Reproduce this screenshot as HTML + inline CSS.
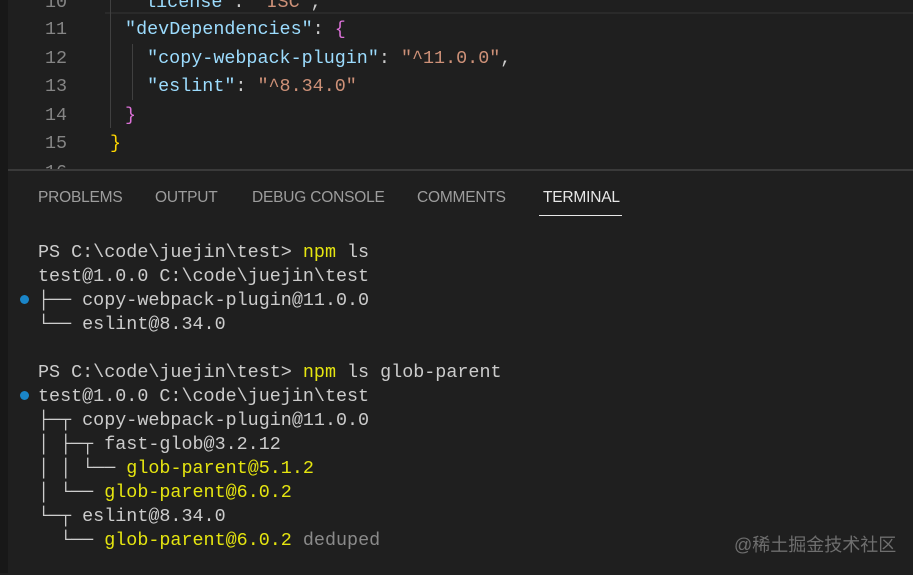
<!DOCTYPE html><html><head><meta charset="utf-8"><style>
body{margin:0;width:913px;height:573px;background:#1f1f1f;overflow:hidden;position:relative;font-family:"Liberation Mono",monospace}
.l{position:absolute;white-space:pre;font-size:18.4px;line-height:24px;color:#cccccc}
.n{color:#858585;font-size:18.4px;position:absolute;white-space:pre;line-height:24px}
.k{color:#9cdcfe}.s{color:#ce9178}.y{color:#e5e510}.p{color:#da70d6}.g{color:#ffd700}.d{color:#8a8a8a}
.tab{position:absolute;top:189px;font-family:"Liberation Sans",sans-serif;font-size:15.5px;color:#9d9d9d;letter-spacing:-0.2px}
.dot{position:absolute;left:20px;width:9px;height:9px;border-radius:50%;background:#1a85c8}
</style></head><body>
<div style="position:absolute;left:0;top:0;width:8px;height:573px;background:#181818"></div>
<div style="position:absolute;left:105px;top:12px;width:808px;height:2px;background:#2a2a2a"></div>
<div style="position:absolute;left:110px;top:0;width:1px;height:128px;background:#404040"></div>
<div style="position:absolute;left:132px;top:44px;width:1px;height:56px;background:#404040"></div>
<div class="n" style="left:45px;top:-9px">10</div>
<div class="l" style="left:112px;top:-9px"><span class="k">  "license"</span>: <span class="s">"ISC"</span>,</div>
<div class="n" style="left:45px;top:18px">11</div>
<div class="l" style="left:114px;top:18px"> <span class="k">"devDependencies"</span>: <span class="p">{</span></div>
<div class="n" style="left:45px;top:47px">12</div>
<div class="l" style="left:114px;top:47px">   <span class="k">"copy-webpack-plugin"</span>: <span class="s">"^11.0.0"</span>,</div>
<div class="n" style="left:45px;top:75px">13</div>
<div class="l" style="left:114px;top:75px">   <span class="k">"eslint"</span>: <span class="s">"^8.34.0"</span></div>
<div class="n" style="left:45px;top:104px">14</div>
<div class="l" style="left:114px;top:104px"> <span class="p">}</span></div>
<div class="n" style="left:45px;top:132px">15</div>
<div class="l" style="left:110px;top:132px"><span class="g">}</span></div>
<div class="n" style="left:45px;top:161px">16</div>
<div style="position:absolute;left:8px;top:169px;width:905px;height:404px;background:#1f1f1f;border-top:2px solid #3a3a3a"></div>
<div class="tab" style="left:38px">PROBLEMS</div>
<div class="tab" style="left:155px">OUTPUT</div>
<div class="tab" style="left:252px">DEBUG CONSOLE</div>
<div class="tab" style="left:417px">COMMENTS</div>
<div class="tab" style="left:543px;color:#e7e7e7">TERMINAL</div>
<div style="position:absolute;left:539px;top:215px;width:83px;height:1px;background:#e7e7e7"></div>
<div class="l" style="left:38px;top:241px">PS C:\code\juejin\test&gt; <span class="y">npm</span> ls</div>
<div class="l" style="left:38px;top:265px">test@1.0.0 C:\code\juejin\test</div>
<div class="dot" style="top:295px"></div>
<div class="l" style="left:38px;top:289px">├── copy-webpack-plugin@11.0.0</div>
<div class="l" style="left:38px;top:313px">└── eslint@8.34.0</div>
<div class="l" style="left:38px;top:361px">PS C:\code\juejin\test&gt; <span class="y">npm</span> ls glob-parent</div>
<div class="dot" style="top:391px"></div>
<div class="l" style="left:38px;top:385px">test@1.0.0 C:\code\juejin\test</div>
<div class="l" style="left:38px;top:409px">├─┬ copy-webpack-plugin@11.0.0</div>
<div class="l" style="left:38px;top:433px">│ ├─┬ fast-glob@3.2.12</div>
<div class="l" style="left:38px;top:457px">│ │ └── <span class="y">glob-parent@5.1.2</span></div>
<div class="l" style="left:38px;top:481px">│ └── <span class="y">glob-parent@6.0.2</span></div>
<div class="l" style="left:38px;top:505px">└─┬ eslint@8.34.0</div>
<div class="l" style="left:38px;top:529px">  └── <span class="y">glob-parent@6.0.2</span> <span class="d">deduped</span></div>
<div style="position:absolute;left:734px;top:531px;font-family:'Liberation Sans','Noto Sans CJK SC',sans-serif;font-size:18px;color:#6e6e6e">@稀土掘金技术社区</div>
</body></html>
